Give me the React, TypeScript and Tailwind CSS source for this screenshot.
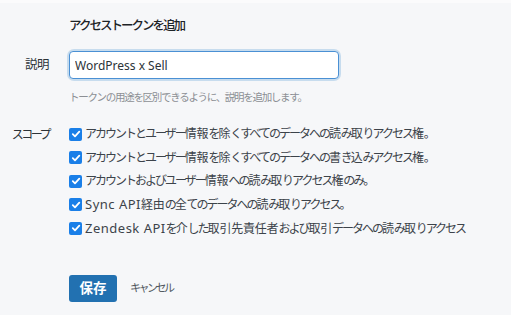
import { useState } from 'react'

const scopes = [
  'アカウントとユーザー情報を除くすべてのデータへの読み取りアクセス権。',
  'アカウントとユーザー情報を除くすべてのデータへの書き込みアクセス権。',
  'アカウントおよびユーザー情報への読み取りアクセス権のみ。',
  'Sync API経由の全てのデータへの読み取りアクセス。',
  'Zendesk APIを介した取引先責任者および取引データへの読み取りアクセス',
]

// kana runs are tightened, kanji and latin keep their own widths
function Mixed({ text }: { text: string }) {
  const parts = text.match(/[\x00-\x7f]+|[\u4e00-\u9fff]+|[^\x00-\x7f\u4e00-\u9fff]+/g) || []
  return (
    <>
      {parts.map((p, i) => {
        if (/^[\x00-\x7f]+$/.test(p)) return <span key={i} className="text-[13px] tracking-[0.5px]">{p}</span>
        if (/^[\u4e00-\u9fff]+$/.test(p)) return <span key={i} className="tracking-[-0.2px]">{p}</span>
        return <span key={i} className="tracking-[-2px]">{p}</span>
      })}
    </>
  )
}

function Check() {
  return (
    <span className="w-[13px] h-[13px] rounded-[2px] bg-[#1a7fe8] flex items-center justify-center shrink-0">
      <svg width="10" height="10" viewBox="0 0 10 10" fill="none">
        <path d="M1.8 5.2 L4 7.3 L8.3 2.6" stroke="white" strokeWidth="1.8" strokeLinecap="round" strokeLinejoin="round" />
      </svg>
    </span>
  )
}

export default function App() {
  const [desc, setDesc] = useState('WordPress x Sell')

  return (
    <main
      className="min-h-screen w-[511px] h-[315px] bg-[#f6f7f9] border-t-[3px] border-[#fbfbfc] text-[#1d2327]"
      style={{ fontFamily: '"Noto Sans", "Noto Sans CJK JP", sans-serif' }}
    >
      <div className="pl-[69px] pt-[14px]">
        <h2 className="text-[12.5px] font-medium tracking-[-2px] leading-[18px]">アクセストークンを追加</h2>
      </div>

      <div className="flex items-center mt-[16px]">
        <label className="w-[49px] text-right text-[12.5px] tracking-[-0.5px] text-[#2c3338]">説明</label>
        <div className="ml-5 rounded-[5px] ring-2 ring-[#c7dcee]">
          <input
            value={desc}
            onChange={(e) => setDesc(e.target.value)}
            className="w-[270px] h-[28px] rounded-[4px] border border-[#4a90d4] bg-white px-[5px] text-[12px] text-[#2c3338] outline-none"
          />
        </div>
      </div>
      <p className="pl-[69px] mt-[11px] text-[10.5px] tracking-[-1.3px] text-[#8c8f94] leading-[14px]">
        トークンの用途を区別できるように、説明を追加します。
      </p>

      <div className="flex mt-[21px]">
        <div className="w-[49px] text-right text-[12px] tracking-[-2.5px] text-[#2c3338] leading-[18px] pt-[1px]">スコープ</div>
        <ul className="ml-5 flex flex-col gap-[5px]">
          {scopes.map((s) => (
            <li key={s} className="flex items-center gap-[3px] h-[18.5px]">
              <Check />
              <span className="text-[12px] text-[#3c434a] whitespace-nowrap">
                <Mixed text={s} />
              </span>
            </li>
          ))}
        </ul>
      </div>

      <div className="flex items-center pl-[69px] mt-[37px] gap-[13px]">
        <button className="w-[48px] h-[27px] rounded-[3px] bg-[#2271b1] text-white text-[13.5px] font-bold">保存</button>
        <button className="text-[11px] tracking-[-2.5px] text-[#50575e]">キャンセル</button>
      </div>
    </main>
  )
}
